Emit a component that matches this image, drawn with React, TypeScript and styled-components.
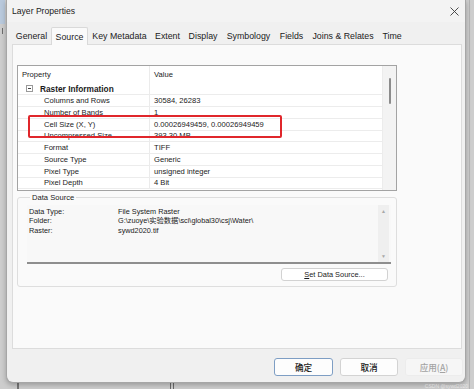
import { Fragment } from "react";
import styled, { createGlobalStyle } from "styled-components";

const GlobalStyle = createGlobalStyle`
    html, body {
        margin: 0;
        padding: 0;
        background: #cbcbcb;
        overflow: hidden;
    }
    * {
        box-sizing: border-box;
    }
`;

const UI_FONT = `"Liberation Sans", "Noto Sans CJK SC", Arial, sans-serif`;
const CJK_FONT = `"Noto Sans CJK SC", "Liberation Sans", sans-serif`;

/* 바탕 화면 (뒤에 있는 창들의 가장자리) */
const Desktop = styled.div`
    position: relative;
    width: 474px;
    height: 389px;
    padding-left: 6px;
    font-family: ${UI_FONT};
    color: #1b1b1b;
    background:
        linear-gradient(#b9c9dc, #b9c9dc) 0 0 / 5px 24px no-repeat,
        linear-gradient(#6d6d6d, #6d6d6d) 2px 28px / 1px 6px no-repeat,
        linear-gradient(#777, #777) 17px 383px / 2px 6px no-repeat,
        linear-gradient(#6a6a6a, #6a6a6a) 170px 383px / 1px 6px no-repeat,
        linear-gradient(#6a6a6a, #6a6a6a) 173px 383px / 1px 6px no-repeat,
        linear-gradient(#b4b4b4, #b4b4b4) 469px 0 / 1px 389px no-repeat,
        #cdcdcd;
`;

const Window = styled.div`
    width: 460px;
    height: 383px;
    display: flex;
    flex-direction: column;
    background: #f0f0f0;
    border: 1px solid #a6a6a6;
    border-top: none;
    border-radius: 0 0 7px 7px;
    box-shadow: 0 2px 5px rgba(0, 0, 0, 0.25);
    overflow: hidden;
`;

const TitleBar = styled.div`
    height: 22px;
    display: flex;
    align-items: center;
    justify-content: space-between;
    padding: 0 4px 0 5px;
    background: #f3f3f3;
    font-size: 8.6px;
`;

const CloseButton = styled.div`
    width: 14px;
    height: 14px;
    display: flex;
    align-items: center;
    justify-content: center;
`;

const TabStrip = styled.div`
    display: flex;
    height: 16px;
    margin-top: 6px;
    padding-left: 5px;
    position: relative;
    z-index: 1;
`;

const Tab = styled.div<{ $w: number; $active?: boolean }>`
    width: ${(p) => p.$w}px;
    display: flex;
    align-items: center;
    justify-content: center;
    font-size: 8.8px;
    white-space: nowrap;
    ${(p) =>
        p.$active &&
        `
        background: #fafafa;
        border: 1px solid #d9d9d9;
        border-bottom: none;
        margin-top: -1px;
        height: 18px;
        border-radius: 2px 2px 0 0;
    `}
`;

const Panel = styled.div`
    width: 450px;
    height: 305px;
    margin-left: 5px;
    padding: 20px 0 0 4px;
    background: #fafafa;
    border: 1px solid #dcdcdc;
`;

/* 속성 표 */
const PropTable = styled.div`
    position: relative;
    width: 380px;
    height: 126px;
    display: flex;
    background: #fff;
    border: 1px solid #a3a3a3;
    overflow: hidden;
`;

const Grid = styled.div`
    flex: 1;
    font-size: 7.6px;
`;

const HeaderRow = styled.div`
    height: 17.5px;
    display: flex;
    align-items: center;
`;

const Row = styled.div`
    height: 11.75px;
    display: flex;
    align-items: center;
    border-bottom: 1px solid #ececec;
`;

const NameCell = styled.div<{ $indent: number; $bold?: boolean }>`
    width: 132px;
    height: 100%;
    display: flex;
    align-items: center;
    gap: 7px;
    padding-left: ${(p) => p.$indent}px;
    border-right: 1px solid #ebebeb;
    font-weight: ${(p) => (p.$bold ? 700 : 400)};
    font-size: ${(p) => (p.$bold ? "8.3px" : "inherit")};
    white-space: nowrap;
`;

const ValueCell = styled.div`
    padding-left: 4px;
    white-space: nowrap;
`;

const Expander = styled.span`
    width: 7px;
    height: 7px;
    border: 1px solid #9a9a9a;
    display: flex;
    align-items: center;
    justify-content: center;
    &::after {
        content: "";
        width: 3px;
        height: 1px;
        background: #444;
    }
`;

const VScroll = styled.div`
    width: 14px;
    background: #f3f3f3;
    border-left: 1px solid #ececec;
    display: flex;
    justify-content: center;
    padding-top: 12px;
`;

const Thumb = styled.div`
    width: 2px;
    height: 26px;
    border-radius: 1px;
    background: #8c8c8c;
`;

const Highlight = styled.div`
    position: absolute;
    left: 10px;
    top: 49px;
    width: 254px;
    height: 23px;
    border: 2px solid #e0262b;
    border-radius: 2px;
    pointer-events: none;
`;

/* 데이터 소스 그룹 */
const GroupBox = styled.fieldset`
    width: 380px;
    margin: 2px 0 0 0;
    padding: 3px 5px 5px 9px;
    border: 1px solid #dedede;
    border-radius: 3px;
    display: flex;
    flex-direction: column;
    align-items: flex-end;
    legend {
        font-size: 7.6px;
        padding: 0 2px;
        margin-left: 3px;
        line-height: 9px;
    }
`;

const InfoBox = styled.div`
    width: 100%;
    height: 59px;
    display: flex;
    background: #f8f8f8;
    border-bottom: 2px solid #8e8e8e;
`;

const InfoGrid = styled.div`
    flex: 1;
    display: grid;
    grid-template-columns: 89px 1fr;
    align-content: start;
    padding: 2px 0 0 2px;
    font-size: 7.3px;
    line-height: 9.3px;
    font-family: ${UI_FONT};
    white-space: nowrap;
`;

const InfoScroll = styled.div`
    width: 11px;
    margin-right: 2px;
    display: flex;
    flex-direction: column;
    justify-content: space-between;
    align-items: center;
    padding: 4px 0 3px;
    background: #efefef;
    color: #a8a8a8;
    font-size: 5px;
    line-height: 5px;
`;

const SmallButton = styled.div`
    width: 107px;
    height: 13px;
    margin: 4px 3px 0 0;
    display: flex;
    align-items: center;
    justify-content: center;
    background: #fff;
    border: 1px solid #d2d2d2;
    border-radius: 3px;
    font-size: 7.4px;
    u {
        text-decoration: underline;
    }
`;

const ButtonRow = styled.div`
    display: flex;
    justify-content: flex-end;
    gap: 7px;
    margin-top: 9px;
    padding-right: 2px;
`;

const DialogButton = styled.div<{ $w: number; $kind?: "primary" | "disabled" }>`
    width: ${(p) => p.$w}px;
    height: 18px;
    display: flex;
    align-items: center;
    justify-content: center;
    font-family: ${CJK_FONT};
    font-size: 8.6px;
    font-weight: 500;
    border-radius: 3px;
    background: ${(p) => (p.$kind === "disabled" ? "#f6f6f6" : "#fdfdfd")};
    color: ${(p) => (p.$kind === "disabled" ? "#a3a3a3" : "#1a1a1a")};
    border: 1px solid
        ${(p) =>
            p.$kind === "primary" ? "#7e9ec4" : p.$kind === "disabled" ? "#ececec" : "#d3d3d3"};
    u {
        text-decoration: underline;
    }
`;

const Watermark = styled.span`
    position: absolute;
    right: 6px;
    bottom: 0;
    font-size: 5px;
    color: rgba(255, 255, 255, 0.55);
`;

const tabs = [
    { label: "General", w: 39 },
    { label: "Source", w: 37, active: true },
    { label: "Key Metadata", w: 63 },
    { label: "Extent", w: 33 },
    { label: "Display", w: 38 },
    { label: "Symbology", w: 53 },
    { label: "Fields", w: 33 },
    { label: "Joins & Relates", w: 70 },
    { label: "Time", w: 28 },
];

const rows = [
    ["Columns and Rows", "30584, 26283"],
    ["Number of Bands", "1"],
    ["Cell Size (X, Y)", "0.00026949459, 0.00026949459"],
    ["Uncompressed Size", "393.30 MB"],
    ["Format", "TIFF"],
    ["Source Type", "Generic"],
    ["Pixel Type", "unsigned integer"],
    ["Pixel Depth", "4 Bit"],
];

const info = [
    ["Data Type:", "File System Raster"],
    ["Folder:", "G:\\zuoye\\实验数据\\sci\\global30\\csj\\Water\\"],
    ["Raster:", "sywd2020.tif"],
];

const App = () => {
    return (
        <>
            <GlobalStyle />
            <Desktop>
                <Window>
                    <TitleBar>
                        <span>Layer Properties</span>
                        <CloseButton>
                            <svg width="9" height="9" viewBox="0 0 9 9">
                                <path d="M0.5 0.5 L8.5 8.5 M8.5 0.5 L0.5 8.5" stroke="#3a3a3a" strokeWidth="0.9" />
                            </svg>
                        </CloseButton>
                    </TitleBar>
                    <TabStrip>
                        {tabs.map((t) => (
                            <Tab key={t.label} $w={t.w} $active={t.active}>
                                {t.label}
                            </Tab>
                        ))}
                    </TabStrip>
                    <Panel>
                        <PropTable>
                            <Grid>
                                <HeaderRow>
                                    <NameCell $indent={4}>Property</NameCell>
                                    <ValueCell>Value</ValueCell>
                                </HeaderRow>
                                <Row>
                                    <NameCell $indent={8} $bold>
                                        <Expander />
                                        Raster Information
                                    </NameCell>
                                </Row>
                                {rows.map(([name, value]) => (
                                    <Row key={name}>
                                        <NameCell $indent={26}>{name}</NameCell>
                                        <ValueCell>{value}</ValueCell>
                                    </Row>
                                ))}
                            </Grid>
                            <VScroll>
                                <Thumb />
                            </VScroll>
                            <Highlight />
                        </PropTable>
                        <GroupBox>
                            <legend>Data Source</legend>
                            <InfoBox>
                                <InfoGrid>
                                    {info.map(([k, v]) => (
                                        <Fragment key={k}>
                                            <span>{k}</span>
                                            <span>{v}</span>
                                        </Fragment>
                                    ))}
                                </InfoGrid>
                                <InfoScroll>
                                    <span>▲</span>
                                    <span>▼</span>
                                </InfoScroll>
                            </InfoBox>
                            <SmallButton>
                                <span>
                                    <u>S</u>et Data Source...
                                </span>
                            </SmallButton>
                        </GroupBox>
                    </Panel>
                    <ButtonRow>
                        <DialogButton $w={59} $kind="primary">确定</DialogButton>
                        <DialogButton $w={58}>取消</DialogButton>
                        <DialogButton $w={58} $kind="disabled">
                            <span>
                                应用(<u>A</u>)
                            </span>
                        </DialogButton>
                    </ButtonRow>
                </Window>
                <Watermark>CSDN @sywd2020</Watermark>
            </Desktop>
        </>
    );
};

export default App;
